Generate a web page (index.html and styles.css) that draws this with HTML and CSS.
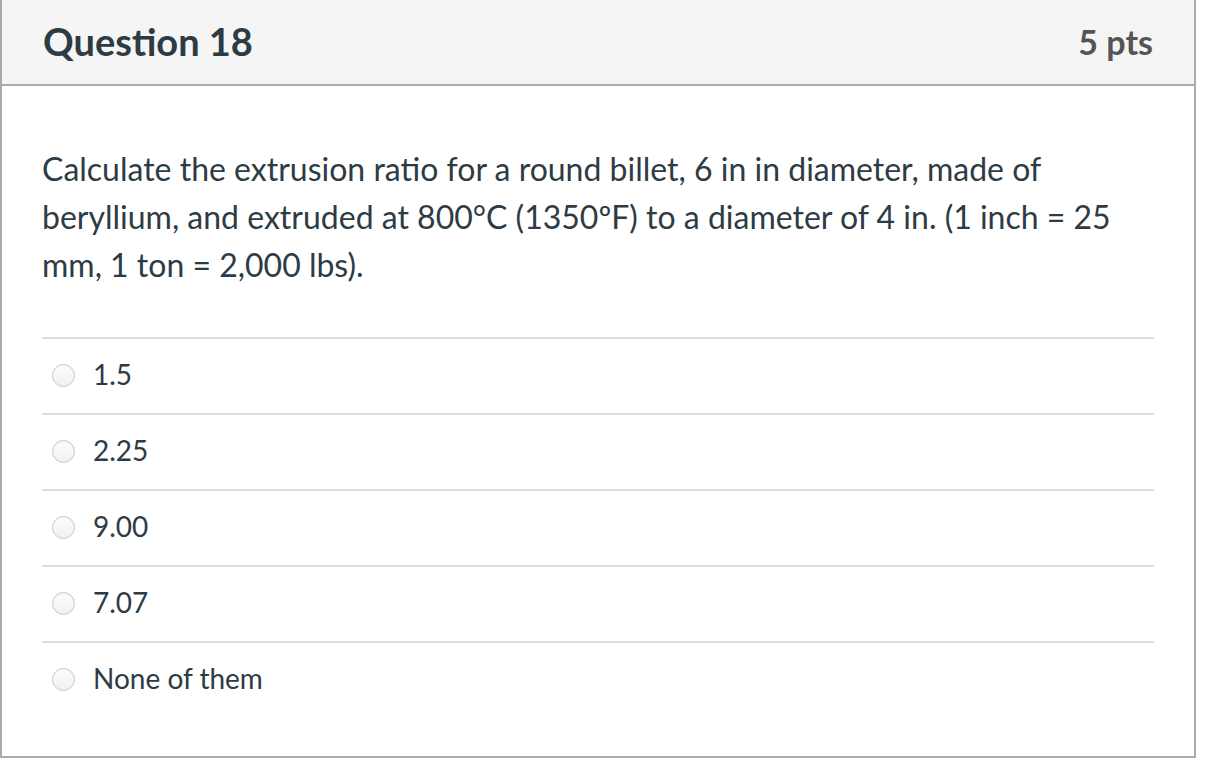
FILE: index.html
```html
<!DOCTYPE html>
<html>
<head>
<meta charset="utf-8">
<link rel="stylesheet" href="styles.css">
</head>
<body>
<div class="card">
  <div class="header">
    <h2 class="title">Question 18</h2>
    <div class="pts">5 pts</div>
  </div>
  <div class="body">
    <p class="question">Calculate the extrusion ratio for a round billet, 6 in in diameter, made of beryllium, and extruded at 800°C (1350ºF) to a diameter of 4 in. (1 inch = 25 mm, 1 ton = 2,000 lbs).</p>
    <div class="answers">
      <div class="answer"><span class="radio"></span><span class="label">1.5</span></div>
      <div class="answer"><span class="radio"></span><span class="label">2.25</span></div>
      <div class="answer"><span class="radio"></span><span class="label">9.00</span></div>
      <div class="answer"><span class="radio"></span><span class="label">7.07</span></div>
      <div class="answer"><span class="radio"></span><span class="label">None of them</span></div>
    </div>
  </div>
</div>
</body>
</html>
```
FILE: styles.css
```css
html, body {
  margin: 0;
  padding: 0;
  background: #fff;
}
body {
  font-family: Lato, "Open Sans", sans-serif;
  color: #2d3b45;
}
.card {
  width: 1192px;
  border: 2px solid #aaaaaa;
  border-top: none;
}
.header {
  height: 86px;
  box-sizing: border-box;
  background: #f5f5f5;
  border-bottom: 2px solid #aaaaaa;
  display: flex;
  align-items: center;
  justify-content: space-between;
  padding: 0 41px 2px 41px;
}
.title {
  margin: 0;
  font-size: 38px;
  font-weight: 700;
  color: #2d3b45;
}
.pts {
  font-size: 34px;
  font-weight: 700;
  color: #555;
}
.body {
  padding: 59px 40px 39px 40px;
}
.question {
  margin: 0 0 48px 0;
  font-size: 32px;
  line-height: 48px;
}
.answer {
  border-top: 2px solid #dddddd;
  height: 74px;
  display: flex;
  align-items: center;
  padding-left: 10px;
}
.radio {
  width: 21px;
  height: 21px;
  border-radius: 50%;
  border: 1px solid #c8c8c8;
  background: linear-gradient(#fdfdfd, #f0f0f0);
  box-shadow: inset 0 1px 1px rgba(0,0,0,0.05);
  margin-right: 18px;
  margin-bottom: 2px;
  flex: none;
}
.label {
  font-size: 28px;
  line-height: 34px;
  margin-bottom: 4px;
  color: #2d3b45;
}
```
